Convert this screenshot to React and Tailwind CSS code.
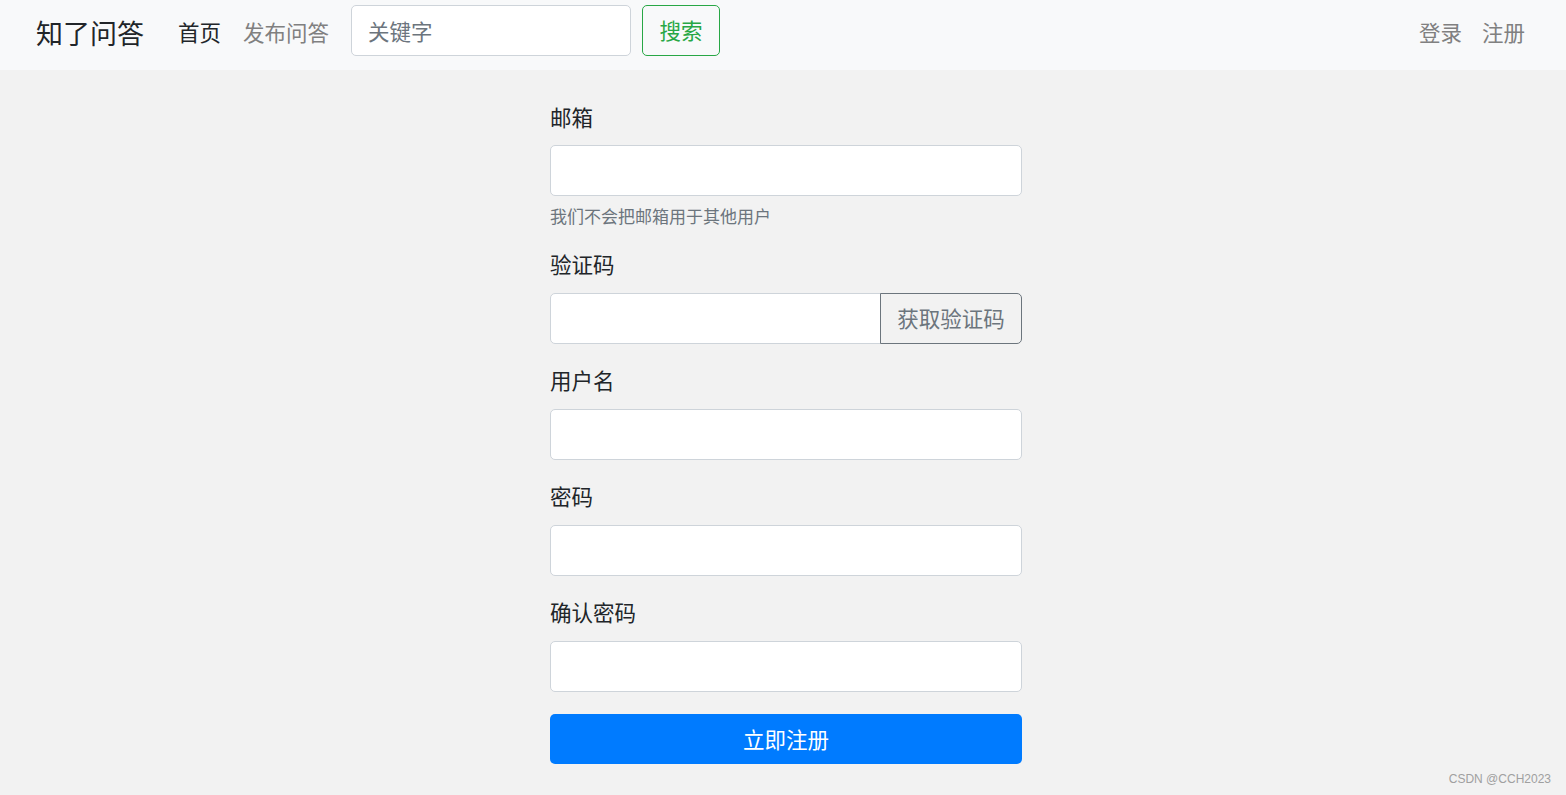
import React from 'react';

const font = { fontFamily: '"Noto Sans CJK SC", "Noto Sans", sans-serif' };

function Field({ label, children }) {
    return (
        <div className="mb-[20px]">
            <label className="block text-[21.5px] leading-[32px] mb-[13px] text-[#212529]">{label}</label>
            {children}
        </div>
    );
}

function TextInput({ type = 'text' }) {
    return (
        <input type={type} className="block w-full h-[51px] bg-white border border-[#ced4da] rounded-[5px] px-4 text-[21px] outline-none" />
    );
}

export default function App() {
    return (
        <div className="min-h-[795px] bg-[#f2f2f2] relative" style={font}>
            <nav className="h-[70px] bg-[#f8f9fa] pt-[5px] pl-[36px] pr-[41px]">
                <div className="h-[51px] flex items-center">
                    <a className="text-[27px] leading-[40px] text-[#212529] mr-[34px] mt-[4px]" href="#">知了问答</a>
                    <a className="text-[21.5px] text-[#212529] mr-[22px] mt-[4px]" href="#">首页</a>
                    <a className="text-[21.5px] text-[#808080] mr-[22px] mt-[4px]" href="#">发布问答</a>
                    <input placeholder="关键字" className="w-[280px] h-[51px] bg-white border border-[#ced4da] rounded-[5px] px-4 text-[21.5px] placeholder:text-[#6c757d] outline-none" />
                    <button className="ml-[11px] w-[78px] h-[51px] border border-[#28a745] text-[#28a745] rounded-[5px] text-[21.5px]">搜索</button>
                    <div className="ml-auto flex gap-[20px] text-[21.5px] text-[#808080] mt-[4px]">
                        <a href="#">登录</a>
                        <a href="#">注册</a>
                    </div>
                </div>
            </nav>

            <div className="flex justify-center pl-[6px]">
                <div className="w-[472px] pt-[31px]">
                    <div className="mb-[20px]">
                        <label className="block text-[21.5px] leading-[32px] mb-[12px] text-[#212529]">邮箱</label>
                        <TextInput type="email" />
                        <div className="mt-[7px] text-[17px] leading-[25px] text-[#6c757d]">我们不会把邮箱用于其他用户</div>
                    </div>
                    <Field label="验证码">
                        <div className="flex h-[51px]">
                            <input className="flex-1 min-w-0 bg-white border border-[#ced4da] rounded-l-[5px] px-4 text-[21px] outline-none" />
                            <button className="w-[142px] border border-[#6c757d] rounded-r-[5px] text-[#6c757d] text-[21.5px] -ml-px">获取验证码</button>
                        </div>
                    </Field>
                    <Field label="用户名"><TextInput /></Field>
                    <Field label="密码"><TextInput type="password" /></Field>
                    <Field label="确认密码"><TextInput type="password" /></Field>
                    <button className="w-full h-[50px] bg-[#007bff] text-white rounded-[5px] text-[21.5px] mt-[2px]">立即注册</button>
                </div>
            </div>

            <div className="absolute right-[15px] bottom-[7px] text-[12px] text-[#a0a0a0]" style={{ fontFamily: '"Liberation Sans", sans-serif' }}>CSDN @CCH2023</div>
        </div>
    );
}
